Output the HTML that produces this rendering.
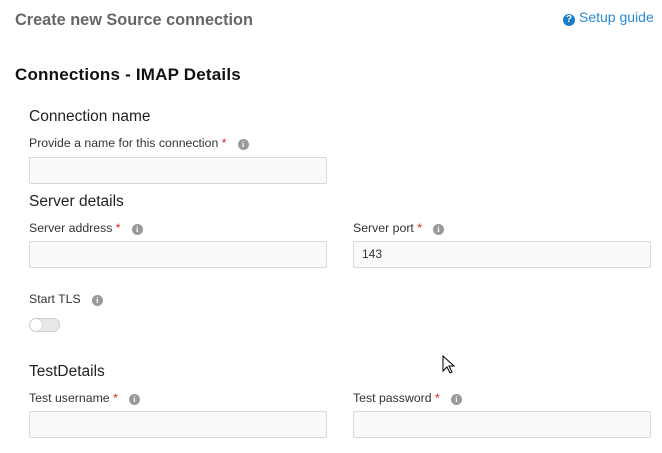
<!DOCTYPE html>
<html><head><style>
body{margin:0;width:662px;height:453px;background:#fff;font-family:"Liberation Sans",Arial,sans-serif;position:relative;overflow:hidden}
.a{position:absolute;white-space:nowrap}
.t{font-size:16.3px;font-weight:bold;color:#666;left:15px;top:11px}
.h{font-size:17px;font-weight:bold;color:#111;left:15px;top:65px;letter-spacing:0.2px}
.s{font-size:15.5px;color:#222}
.l{font-size:12.3px;color:#333}
.r{color:#e02020}
.i{display:inline-block;width:11px;height:11px;border-radius:50%;background:#999;color:#fff;font-size:8px;line-height:11px;text-align:center;font-weight:bold;vertical-align:0px;margin-left:11px;font-family:"Liberation Serif",serif}
.in{position:absolute;width:296px;height:25px;border:1px solid #d9d9d9;border-radius:2px;background:#fafafa;font-size:12px;color:#333;line-height:25px;box-sizing:content-box}
</style></head><body>
<div class="a t">Create new Source connection</div>
<div class="a" style="left:563px;top:9px;font-size:14px;color:#2a8ad0"><span style="display:inline-block;width:12px;height:12px;border-radius:50%;background:#1a7cc4;color:#fff;font-size:10px;font-weight:bold;line-height:12px;text-align:center;margin-right:4px;vertical-align:0px">?</span>Setup guide</div>
<div class="a h">Connections - IMAP Details</div>
<div class="a s" style="left:29px;top:108px">Connection name</div>
<div class="a l" style="left:29px;top:136px">Provide a name for this connection<span class="r"> *</span><span class="i">i</span></div>
<div class="in" style="left:29px;top:157px"></div>
<div class="a s" style="left:29px;top:193px">Server details</div>
<div class="a l" style="left:29px;top:221px">Server address<span class="r"> *</span><span class="i">i</span></div>
<div class="a l" style="left:353px;top:221px">Server port<span class="r"> *</span><span class="i">i</span></div>
<div class="in" style="left:29px;top:241px"></div>
<div class="in" style="left:353px;top:241px;padding-left:0"><span style="margin-left:8px">143</span></div>
<div class="a l" style="left:29px;top:292px">Start TLS<span class="i">i</span></div>
<div class="a" style="left:29px;top:318px;width:29px;height:12px;border-radius:7px;background:#e8e8e8;border:1px solid #d0d0d0"><div style="position:absolute;left:0;top:0;width:12px;height:12px;border-radius:50%;background:#fff;box-shadow:0 0 1px #999"></div></div>
<div class="a s" style="left:29px;top:363px">TestDetails</div>
<div class="a l" style="left:29px;top:391px">Test username<span class="r"> *</span><span class="i">i</span></div>
<div class="a l" style="left:353px;top:391px">Test password<span class="r"> *</span><span class="i">i</span></div>
<div class="in" style="left:29px;top:411px"></div>
<div class="in" style="left:353px;top:411px"></div>
<svg class="a" style="left:442px;top:355px" width="14" height="20" viewBox="0 0 14 20"><path d="M1 1 L1 16 L5 12 L8 18 L10 17 L7 11 L12 11 Z" fill="#fff" stroke="#000" stroke-width="1"/></svg>
</body></html>
